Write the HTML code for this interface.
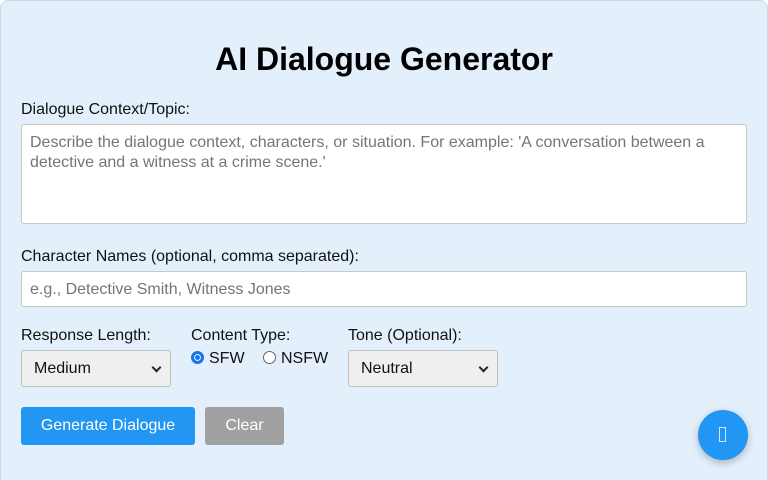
<!DOCTYPE html>
<html><head><style>
html,body{margin:0;background:#fff;font-family:"Liberation Sans",sans-serif;width:768px;height:480px;overflow:hidden}
.c{position:absolute;left:0;top:0;width:766px;height:479px;background:#e3f0fc;border:1px solid #cfd8e0;border-bottom:none;border-radius:8px 8px 0 0}
.a{position:absolute}
h1{position:absolute;left:0;width:768px;top:41px;margin:0;text-align:center;font-size:32px;font-weight:bold;color:#000}
.l{font-size:16px;color:#111}
.box{background:#fff;border:1px solid #c8c8c8;border-radius:3px;box-sizing:border-box;color:#757575;font-size:16px;padding:8px 8px;line-height:20px}
.sel{background:#efefef;border:1px solid #c0c0c0;border-radius:3px;box-sizing:border-box;font-size:16px;color:#111}
.btn{color:#fff;font-size:16px;border-radius:3px;text-align:center;line-height:38px}
.r{display:inline-block;width:13px;height:13px;border-radius:50%;box-sizing:border-box;vertical-align:-1px;margin-right:5px}
.chev{position:absolute;right:10px;top:13px;width:5px;height:5px;border-right:2px solid #222;border-bottom:2px solid #222;transform:rotate(45deg)}
</style></head><body>
<div class="c"></div>
<h1>AI Dialogue Generator</h1>
<div class="a l" style="left:21px;top:101px">Dialogue Context/Topic:</div>
<div class="a box" style="left:21px;top:124px;width:726px;height:100px">Describe the dialogue context, characters, or situation. For example: 'A conversation between a detective and a witness at a crime scene.'</div>
<div class="a l" style="left:21px;top:248px">Character Names (optional, comma separated):</div>
<div class="a box" style="left:21px;top:271px;width:726px;height:36px">e.g., Detective Smith, Witness Jones</div>
<div class="a l" style="left:21px;top:327px">Response Length:</div>
<div class="a l" style="left:191px;top:327px">Content Type:</div>
<div class="a l" style="left:348px;top:327px">Tone (Optional):</div>
<div class="a sel" style="left:21px;top:350px;width:150px;height:37px"><span class="a" style="left:12px;top:9px">Medium</span><span class="chev"></span></div>
<div class="a sel" style="left:348px;top:350px;width:150px;height:37px"><span class="a" style="left:12px;top:9px">Neutral</span><span class="chev"></span></div>
<div class="a l" style="left:191px;top:350px"><span class="r" style="border:3px solid #1a73e8;background:#1a73e8;box-shadow:inset 0 0 0 1px #fff"></span>SFW</div>
<div class="a l" style="left:263px;top:350px"><span class="r" style="border:1px solid #666;background:#fff"></span>NSFW</div>
<div class="a btn" style="left:21px;top:407px;width:174px;height:38px;background:#2196f3">Generate Dialogue</div>
<div class="a btn" style="left:205px;top:407px;width:79px;height:38px;background:#a0a0a0">Clear</div>
<div class="a" style="left:698px;top:410px;width:50px;height:50px;border-radius:50%;background:#2196f3;box-shadow:0 3px 8px rgba(0,0,0,.25)"><div class="a" style="left:21px;top:17px;width:7px;height:15px;border:1px solid #cfe6ff;box-sizing:border-box"></div></div>
</body></html>
